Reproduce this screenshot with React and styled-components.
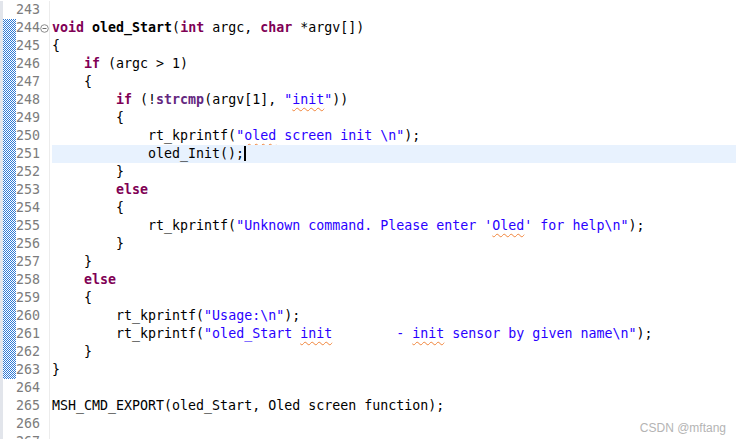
import styled, { createGlobalStyle } from "styled-components";

const GlobalStyle = createGlobalStyle`
    html, body {
        margin: 0;
        padding: 0;
        background: #ffffff;
        overflow: hidden;
    }
`

const Page = styled.div`
    position: relative;
    width: 736px;
    height: 439px;
    overflow: hidden;
    background: #ffffff;
    padding-top: 1px;
    box-sizing: border-box;
`

const Row = styled.div`
    display: grid;
    grid-template-columns: 3px 13px 24px 9px 1fr;
    height: 18px;
    font-family: "DejaVu Sans Mono", "Liberation Mono", monospace;
    font-size: 13.3px;
    line-height: 18px;
`

const Strip = styled.div`
    background: #e2e5eb;
`

const Marker = styled.div`
    display: flex;
    background: #ffffff;
`

const LineNo = styled.div`
    color: #7c7c7c;
    text-align: right;
`

const Fold = styled.div`
    display: flex;
    align-items: center;
    border-right: 1px solid #ececec;
    box-sizing: border-box;
    width: 10px;
`

const Code = styled.div`
    margin-left: 3px;
    white-space: pre;
    color: #000000;
    background: ${props => props.$current ? "#e8f2fe" : "transparent"};
`

const Keyword = styled.span`
    color: #7f0055;
    font-weight: bold;
`

const FuncName = styled.span`
    font-weight: bold;
`

const Builtin = styled.span`
    color: #642880;
    font-weight: bold;
`

const Str = styled.span`
    color: #2a00ff;
`

const Squiggle = styled.span`
    color: #2a00ff;
    text-decoration: underline wavy #f0843a;
    text-decoration-thickness: 1px;
    text-underline-offset: 3px;
`

const Caret = styled.span`
    display: inline-block;
    width: 2px;
    height: 15px;
    background: #000000;
    vertical-align: -3px;
`

const Watermark = styled.div`
    position: absolute;
    right: 10px;
    bottom: 4px;
    font-family: "Liberation Sans", Arial, sans-serif;
    font-size: 12px;
    line-height: 14px;
    color: #b4b4b4;
`

function FoldIcon() {
    return (
        <svg width="9" height="9" viewBox="0 0 9 9">
            <circle cx="4.5" cy="4.5" r="3.8" fill="#ffffff" stroke="#8c8c8c" strokeWidth="1" />
            <line x1="2.5" y1="4.5" x2="6.5" y2="4.5" stroke="#6c6c6c" strokeWidth="1" />
        </svg>
    )
}

// checkered blue "changed lines" marker, drawn pixel by pixel
function ChangeHatch({ id }) {
    return (
        <svg width="13" height="18" shapeRendering="crispEdges">
            <defs>
                <pattern id={id} width="2" height="2" patternUnits="userSpaceOnUse">
                    <rect x="0" y="0" width="2" height="2" fill="#ffffff" />
                    <rect x="0" y="0" width="1" height="1" fill="#2f7ad6" />
                    <rect x="1" y="1" width="1" height="1" fill="#2f7ad6" />
                </pattern>
            </defs>
            <rect x="0" y="0" width="13" height="18" fill={`url(#${id})`} />
        </svg>
    )
}

const k = t => ["k", t]
const f = t => ["f", t]
const b = t => ["b", t]
const s = t => ["s", t]
const q = t => ["q", t]
const p = t => ["p", t]

const lines = [
    [],
    [k("void"), p(" "), f("oled_Start"), p("("), k("int"), p(" argc, "), k("char"), p(" *argv[])")],
    [p("{")],
    [p("    "), k("if"), p(" (argc > 1)")],
    [p("    {")],
    [p("        "), k("if"), p(" (!"), b("strcmp"), p("(argv[1], "), s("\""), q("init"), s("\""), p("))")],
    [p("        {")],
    [p("            rt_kprintf("), s("\""), q("oled"), s(" screen init \\n\""), p(");")],
    [p("            oled_Init();")],
    [p("        }")],
    [p("        "), k("else")],
    [p("        {")],
    [p("            rt_kprintf("), s("\"Unknown command. Please enter '"), q("Oled"), s("' for help\\n\""), p(");")],
    [p("        }")],
    [p("    }")],
    [p("    "), k("else")],
    [p("    {")],
    [p("        rt_kprintf("), s("\"Usage:\\n\""), p(");")],
    [p("        rt_kprintf("), s("\"oled_Start "), q("init"), s("        - "), q("init"), s(" sensor by given name\\n\""), p(");")],
    [p("    }")],
    [p("}")],
    [],
    [p("MSH_CMD_EXPORT(oled_Start, Oled screen function);")],
    [],
    [],
]

function Token({ type, text }) {
    if (type === "k") return <Keyword>{text}</Keyword>
    if (type === "f") return <FuncName>{text}</FuncName>
    if (type === "b") return <Builtin>{text}</Builtin>
    if (type === "s") return <Str>{text}</Str>
    if (type === "q") return <Squiggle>{text}</Squiggle>
    return <>{text}</>
}

function App() {
    const first = 243
    const currentLine = 251
    return (
        <>
            <GlobalStyle />
            <Page>
                {lines.map((tokens, i) => {
                    const num = first + i
                    const changed = num >= 244 && num <= 263
                    return (
                        <Row key={num}>
                            <Strip />
                            <Marker>{changed && <ChangeHatch id={`hatch-${num}`} />}</Marker>
                            <LineNo>{num}</LineNo>
                            <Fold>{num === 244 && <FoldIcon />}</Fold>
                            <Code $current={num === currentLine}>
                                {tokens.map(([type, text], j) => (
                                    <Token key={j} type={type} text={text} />
                                ))}
                                {num === currentLine && <Caret />}
                                {tokens.length === 0 && " "}
                            </Code>
                        </Row>
                    )
                })}
                <Watermark>CSDN @mftang</Watermark>
            </Page>
        </>
    )
}

export default App;
